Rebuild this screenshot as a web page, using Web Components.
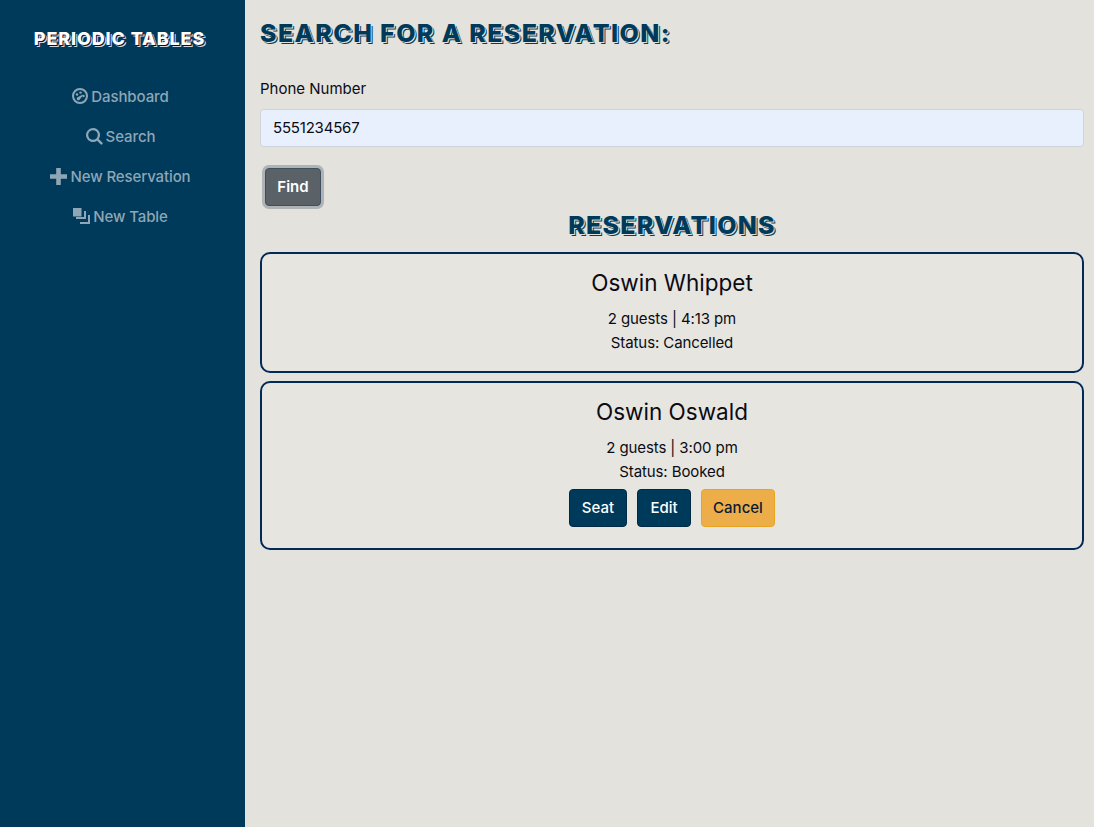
<!DOCTYPE html>
<html>
<head>
<meta charset="utf-8">
<title>Periodic Tables</title>
<style>
  html, body { margin: 0; padding: 0; height: 100%; }
  body { font-family: "Inter", "Open Sans", sans-serif; color: #0b0b14; background: #e3e2dd; }
</style>
</head>
<body>

<template id="nav-link-tpl">
  <style>
    :host { display: flex; justify-content: center; align-items: center; height: 40px; color: #8fa6b6; font-size: 15px; font-weight: 500; letter-spacing: -0.1px; gap: 3px; padding-right: 4px; }
    ::slotted(svg) { display: block; fill: currentColor; }
  </style>
  <slot name="icon"></slot><slot></slot>
</template>

<template id="side-bar-tpl">
  <style>
    :host { display: block; width: 245px; flex: none; background: #003a5a; min-height: 827px; box-sizing: border-box; }
    h1 { margin: 0; padding: 28px 6px 0 0; height: 76px; box-sizing: border-box; text-align: center; color: #fff; font-size: 18px; line-height: 22px; font-weight: 800; letter-spacing: 0.85px; text-shadow: 1px 1px 0 #0b0b2a, 2px 2px 0 #cfd8e0; white-space: nowrap; }
    nav { display: block; }
  </style>
  <h1>PERIODIC TABLES</h1>
  <nav><slot></slot></nav>
</template>

<template id="search-form-tpl">
  <style>
    :host { display: block; }
    h2 { margin: 0; height: 68px; padding-top: 19px; box-sizing: border-box; font-size: 25px; line-height: 28px; font-weight: 800; letter-spacing: 1.4px; color: #003a5a; text-shadow: 1px 1px 0 #e3e2dd, 2px 2px 0 #00405f; white-space: nowrap; }
    label { display: block; font-size: 15px; line-height: 24px; height: 24px; margin-top: 9px; letter-spacing: 0; margin-bottom: -1px; }
    .field { margin-top: 9px; height: 38px; box-sizing: border-box; background: #e8f0fe; border: 1px solid #ced4da; border-radius: 4px; padding: 0 12px 2px; display: flex; align-items: center; font-size: 15px; letter-spacing: -0.2px; width: 100%; font-family: inherit; color: #0b0b14; outline: none; }
    button { display: block; margin: 21px 0 0 5px; width: 56px; height: 38px; box-sizing: border-box; background: #5a6268; color: #fff; border: 1px solid #3d4f60; border-radius: 4px; box-shadow: 0 0 0 3px #b0b3b5; font: 600 15px "Inter", sans-serif; padding: 0 0 2px; }
  </style>
  <h2>SEARCH FOR A RESERVATION:</h2>
  <label for="phone">Phone Number</label>
  <input class="field" id="phone" value="5551234567">
  <button>Find</button>
</template>

<template id="reservation-card-tpl">
  <style>
    :host { display: block; border: 2px solid #012a56; border-radius: 10px; text-align: center; padding: 13px 0 16px; margin-bottom: 8px; background: #e6e5e0; }
    .name { font-size: 22.5px; line-height: 32px; height: 32px; margin-bottom: 8px; font-weight: 400; }
    .line { font-size: 15px; line-height: 24px; letter-spacing: -0.1px; }
    .actions { display: flex; justify-content: center; gap: 10px; }
    :host([actions]) .actions { margin: 5px 0; }
  </style>
  <div class="name"></div>
  <div class="line guests"></div>
  <div class="line status"></div>
  <div class="actions"><slot></slot></div>
</template>

<template id="action-button-tpl">
  <style>
    :host { display: block; height: 38px; box-sizing: border-box; border-radius: 4px; background: var(--bg, #003a5a); color: var(--fg, #fff); border: 1px solid var(--line, #002a44); font-size: 15px; font-weight: 500; line-height: 36px; text-align: center; }
  </style>
  <slot></slot>
</template>

<template id="app-shell-tpl">
  <style>
    :host { display: flex; min-height: 827px; }
    main { flex: 1; min-width: 0; padding: 0 10px 0 15px; }
    h2 { margin: 0; height: 46px; padding-top: 5px; box-sizing: border-box; text-align: center; font-size: 25px; line-height: 28px; font-weight: 800; letter-spacing: 1.25px; color: #003a5a; text-shadow: 1px 1px 0 #e3e2dd, 2px 2px 0 #00405f; }
  </style>
  <slot name="side"></slot>
  <main>
    <slot name="form"></slot>
    <h2>RESERVATIONS</h2>
    <slot></slot>
  </main>
</template>

<app-shell>
  <side-bar slot="side">
    <nav-link>
      <svg slot="icon" width="16" height="16" viewBox="0 0 16 16"><path fill-rule="evenodd" d="M8 0a8 8 0 1 0 0 16A8 8 0 0 0 8 0zm0 2a6 6 0 1 1 0 12A6 6 0 0 1 8 2z"/><circle cx="5" cy="6.500" r="1.200"/><circle cx="8.500" cy="4.600" r="1.200"/><circle cx="11.500" cy="8" r="1.200"/><path d="M5.600 9.300 10.300 6.800l.6.700-3 3.700a1.600 1.600 0 1 1-2.300-1.900z"/></svg>
      Dashboard
    </nav-link>
    <nav-link>
      <svg slot="icon" width="17" height="17" viewBox="0 0 17 17"><path fill-rule="evenodd" d="M7 0a7 7 0 1 0 4.100 12.700l3.500 3.600a1.200 1.200 0 0 0 1.700-1.700l-3.600-3.500A7 7 0 0 0 7 0zm0 2.200a4.800 4.800 0 1 1 0 9.600 4.800 4.800 0 0 1 0-9.600z"/></svg>
      Search
    </nav-link>
    <nav-link>
      <svg slot="icon" width="17" height="17" viewBox="0 0 17 17"><path d="M6.200 0h4.600v6.200H17v4.600h-6.200V17H6.200v-6.200H0V6.200h6.200z"/></svg>
      New Reservation
    </nav-link>
    <nav-link>
      <svg slot="icon" width="17" height="16" viewBox="0 0 17 16"><path d="M0 0h8.500v8.500H0z"/><path d="M11 3h2v8H3V9h8z"/><path d="M15 7h2v9H7v-2h8z"/></svg>
      New Table
    </nav-link>
  </side-bar>
  <search-form slot="form"></search-form>
  <reservation-card name="Oswin Whippet" guests="2 guests | 4:13 pm" status="Status: Cancelled"></reservation-card>
  <reservation-card actions name="Oswin Oswald" guests="2 guests | 3:00 pm" status="Status: Booked">
    <action-button style="width:58px">Seat</action-button>
    <action-button style="width:54px">Edit</action-button>
    <action-button style="width:74px;--bg:#edae49;--fg:#0b1a33;--line:#eaa520">Cancel</action-button>
  </reservation-card>
</app-shell>

<script>
  // every element just clones its template into an open shadow root
  function plain(tag) {
    customElements.define(tag, class extends HTMLElement {
      constructor() {
        super();
        const shadowRoot = this.attachShadow({ mode: 'open' });
        shadowRoot.appendChild(document.getElementById(tag + '-tpl').content.cloneNode(true));
      }
    });
  }
  ['nav-link', 'side-bar', 'search-form', 'action-button', 'app-shell'].forEach(plain);

  class ReservationCard extends HTMLElement {
    constructor() {
      super();
      const shadowRoot = this.attachShadow({ mode: 'open' });
      shadowRoot.appendChild(document.getElementById('reservation-card-tpl').content.cloneNode(true));
    }
    connectedCallback() {
      this.shadowRoot.querySelector('.name').textContent = this.getAttribute('name');
      this.shadowRoot.querySelector('.guests').textContent = this.getAttribute('guests');
      this.shadowRoot.querySelector('.status').textContent = this.getAttribute('status');
    }
  }
  customElements.define('reservation-card', ReservationCard);
</script>
</body>
</html>
